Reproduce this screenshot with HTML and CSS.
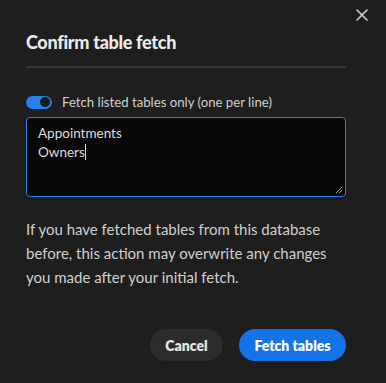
FILE: index.html
```html
<!DOCTYPE html>
<html>
<head>
<meta charset="utf-8">
<link rel="stylesheet" href="styles.css">
</head>
<body>
<div class="dialog">
  <button class="close" aria-label="Close">
    <svg width="12" height="12" viewBox="0 0 12 12"><path d="M1 1L11 11M11 1L1 11" stroke="#d0d0d0" stroke-width="1.6" stroke-linecap="round"/></svg>
  </button>
  <h2 class="title">Confirm table fetch</h2>
  <div class="divider"></div>
  <label class="toggle-row">
    <span class="toggle"><span class="knob"></span></span>
    <span class="toggle-label">Fetch listed tables only (one per line)</span>
  </label>
  <div class="textarea"><div class="ta-text">Appointments<br>Owners<span class="caret"></span></div>
    <svg class="grip" width="8" height="8" viewBox="0 0 8 8"><path d="M7 1L1 7M7 4L4 7" stroke="#9a9a9a" stroke-width="1"/></svg>
  </div>
  <p class="desc">If you have fetched tables from this database before, this action may overwrite any changes you made after your initial fetch.</p>
  <div class="actions">
    <button class="btn secondary">Cancel</button>
    <button class="btn primary">Fetch tables</button>
  </div>
</div>
</body>
</html>
```
FILE: styles.css
```css
html, body { margin: 0; padding: 0; background: #1e1e1e; }
body { width: 386px; height: 383px; overflow: hidden; font-family: "Lato", "Open Sans", sans-serif; color: #d6d6d6; }
.dialog { position: relative; padding: 30px 40px 0 26px; }
.close { position: absolute; top: 9px; right: 18px; width: 12px; height: 12px; padding: 0; border: 0; background: none; display: flex; }
.title { margin: 0; font-size: 18px; line-height: 24px; font-weight: 900; color: #ebebeb; letter-spacing: -0.3px; }
.divider { height: 2px; background: #363636; margin-top: 12px; }
.toggle-row { display: flex; align-items: center; gap: 10px; margin-top: 25px; height: 18px; }
.toggle { width: 26px; height: 13px; border-radius: 7px; background: #2680eb; position: relative; display: block; }
.knob { position: absolute; top: 1.5px; right: 2px; width: 10px; height: 10px; border-radius: 50%; background: #1a1a1a; }
.toggle-label { font-size: 13.2px; color: #d0d0d0; }
.textarea { position: relative; margin-top: 6px; height: 78px; border: 1px solid #2680eb; border-radius: 4px; background: #080808; padding: 0 11px; }
.ta-text { font-size: 13.5px; line-height: 19px; padding-top: 6px; color: #dcdcdc; }
.caret { display: inline-block; width: 1px; height: 16px; background: #dcdcdc; vertical-align: -3px; }
.grip { position: absolute; right: 2px; bottom: 2px; }
.desc { margin: 20px 0 0; font-size: 15px; line-height: 24px; color: #d0d0d0; }
.actions { display: flex; justify-content: flex-end; gap: 16px; margin-top: 40px; }
.btn { height: 32px; border-radius: 16px; border: 0; font-family: inherit; font-weight: 800; font-size: 14px; padding: 0; white-space: nowrap; }
.secondary { background: #2c2c2c; color: #e6e6e6; width: 73px; }
.primary { background: #1473e6; color: #fff; width: 107px; }
```
